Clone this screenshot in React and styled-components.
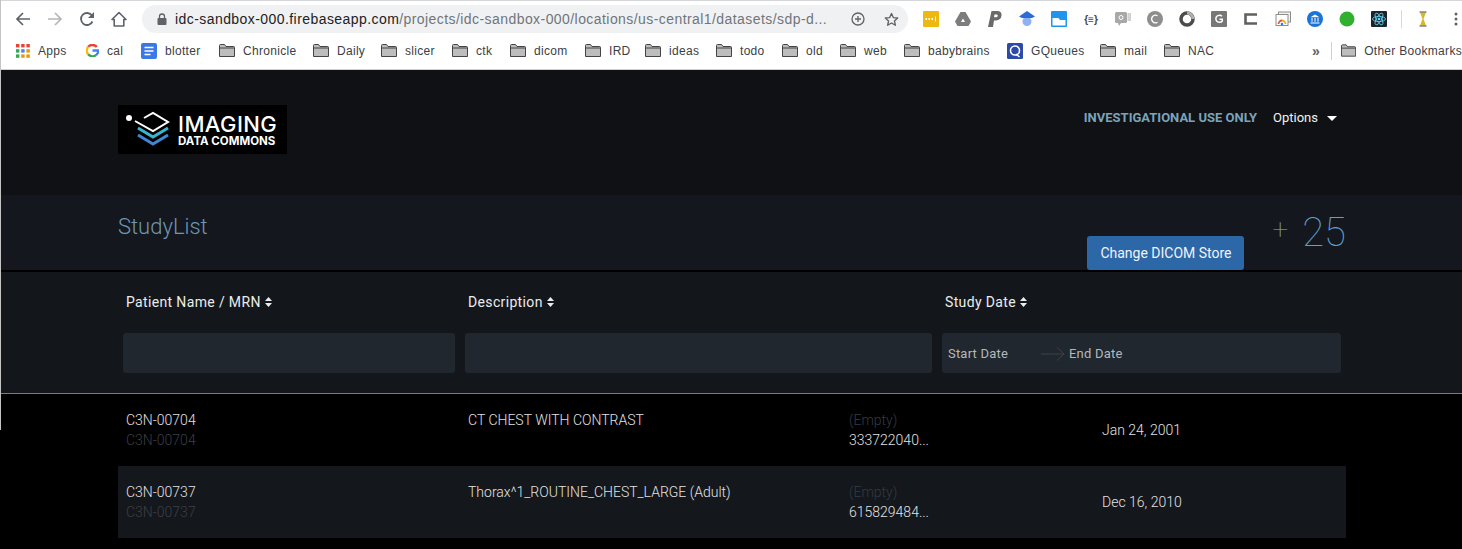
import React from "react";
import styled, { createGlobalStyle } from "styled-components";

const GlobalStyle = createGlobalStyle`
  html, body {
    margin: 0;
    padding: 0;
    background: #000;
    overflow: hidden;
  }
  * {
    box-sizing: border-box;
  }
`;

const Page = styled.div`
  position: relative;
  width: 1462px;
  height: 549px;
  overflow: hidden;
  font-family: Roboto, "Liberation Sans", sans-serif;
  background: #000;
`;

const WindowEdge = styled.div`
  position: absolute;
  left: 0;
  top: 0;
  width: 1px;
  height: 430px;
  background: #c4c4c4;
`;

const Chrome = styled.div`
  height: 70px;
  background: #fff;
  border-bottom: 1px solid #d0d0d0;
  font-family: "Liberation Sans", Arial, sans-serif;
`;

const Toolbar = styled.div`
  display: flex;
  align-items: center;
  height: 36px;
  padding: 1px 0 0 15px;
  border-top: 1px solid #d4d6da;
`;

const NavButtons = styled.div`
  display: flex;
  flex: none;
  align-items: center;
  gap: 16px;
  width: 127px;
`;

const Omnibox = styled.div`
  display: flex;
  flex: none;
  align-items: center;
  width: 766px;
  height: 28px;
  border-radius: 14px;
  background: #f0f1f3;
  padding: 0 9px 0 15px;
  font-size: 14px;
  letter-spacing: 0.43px;
  color: #70757a;
`;

const Host = styled.span`
  color: #202124;
`;

const UrlText = styled.span`
  flex: 1;
  margin-left: 8px;
  white-space: nowrap;
`;

const OmniIcons = styled.div`
  display: flex;
  align-items: center;
  gap: 19px;
`;

const Extensions = styled.div`
  display: flex;
  flex: none;
  align-items: center;
  margin-left: 15px;
  gap: 16px;
`;

const ExtSlot = styled.div`
  flex: none;
  width: 16px;
  height: 16px;
  display: flex;
  align-items: center;
  justify-content: center;
`;

const MenuSlot = styled(ExtSlot)`
  margin-left: 1px;
`;

const JsonGlyph = styled.span`
  font-size: 10px;
  font-weight: 700;
  color: #444;
  white-space: nowrap;
`;

const ExtDivider = styled.div`
  flex: none;
  width: 1px;
  height: 18px;
  background: #d8d8d8;
  margin: 0 -3px 0 -2px;
`;

const Bookmarks = styled.div`
  display: flex;
  align-items: center;
  height: 29px;
  padding-left: 16px;
  font-size: 12px;
  letter-spacing: 0.3px;
  color: #3c4043;
`;

const Bookmark = styled.div`
  display: flex;
  align-items: center;
  gap: 8px;
  width: ${({ $w }) => $w}px;
  flex: none;
  white-space: nowrap;
`;

const BarDivider = styled.div`
  flex: none;
  width: 1px;
  height: 18px;
  background: #d0d0d0;
  margin: 0 9px 0 10px;
`;

const Chevrons = styled.span`
  flex: none;
  width: 9px;
  font-size: 14px;
  font-weight: 700;
  line-height: 14px;
  color: #5f6368;
`;

const Header = styled.header`
  height: 125px;
  background: #0f1114;
  display: flex;
  justify-content: space-between;
  padding: 35px 125px 0 118px;
`;

const Logo = styled.div`
  display: flex;
  align-items: center;
  width: 169px;
  height: 49px;
  background: #000;
  gap: 8px;
  color: #fff;
  font-family: Inter, "Liberation Sans", sans-serif;
`;

const LogoText = styled.div`
  display: flex;
  flex-direction: column;
`;

const LogoTitle = styled.span`
  font-size: 22px;
  font-weight: 500;
  line-height: 22px;
  letter-spacing: 0.4px;
`;

const LogoSub = styled.span`
  font-size: 11.5px;
  line-height: 12px;
  font-weight: 700;
`;

const HeaderLinks = styled.div`
  display: flex;
  align-items: center;
  height: 25px;
  font-size: 13px;
`;

const UseNotice = styled.span`
  font-weight: 700;
  color: #7ba3bb;
  margin-right: 16px;
`;

const Options = styled.span`
  color: #f2f2f2;
  margin-right: 9px;
`;

const Caret = styled.span`
  width: 0;
  height: 0;
  margin-top: 2px;
  border-left: 5px solid transparent;
  border-right: 5px solid transparent;
  border-top: 5px solid #fff;
`;

const ListBar = styled.div`
  height: 75px;
  background: #14181e;
  display: flex;
  justify-content: space-between;
  padding: 16px 116px 0 118px;
`;

const ListTitle = styled.h1`
  margin: 0;
  font-size: 22px;
  line-height: 32px;
  font-weight: 300;
  color: #6e97b3;
`;

const ListActions = styled.div`
  display: flex;
  align-items: flex-start;
`;

const ChangeButton = styled.button`
  width: 157px;
  height: 34px;
  margin: 25px 28px 0 0;
  border: none;
  border-radius: 3px;
  background: #2c67a8;
  color: #f0f3f7;
  font-family: inherit;
  font-size: 14px;
`;

const Plus = styled.span`
  font-size: 28px;
  line-height: 30px;
  margin-top: 4px;
  font-weight: 100;
  color: #8ab0c8;
  margin-right: 14px;
`;

const Count = styled.span`
  font-size: 40px;
  line-height: 44px;
  font-weight: 100;
  color: #5fa0cc;
`;

const FilterPanel = styled.div`
  height: 124px;
  background: #13171c;
  border-top: 2px solid #000;
  border-bottom: 1px solid #3c8fc4;
  padding: 19px 0 0 123px;
`;

const ColumnRow = styled.div`
  display: flex;
  gap: 10px;
`;

const FilterColumn = styled.div`
  width: ${({ $w }) => $w}px;
`;

const ColumnLabel = styled.div`
  display: flex;
  align-items: center;
  gap: 4px;
  height: 22px;
  padding-left: 3px;
  margin-bottom: 20px;
  font-size: 14px;
  letter-spacing: 0.35px;
  color: #ececec;
`;

const FilterInput = styled.div`
  display: flex;
  align-items: center;
  height: 40px;
  border-radius: 3px;
  background: #20272e;
  padding: 1px 0 0 6px;
  font-size: 13px;
  letter-spacing: 0.2px;
  color: #b4b8bc;
`;

const DateLabel = styled.span`
  width: ${({ $w }) => $w}px;
  margin-left: ${({ $gap }) => $gap || 0}px;
`;

const Row = styled.div`
  display: flex;
  width: 1228px;
  height: 72px;
  margin-left: 118px;
  padding-top: 16px;
  background: ${({ $shaded }) => ($shaded ? "#14171c" : "#000")};
  font-size: 14px;
  font-weight: 300;
  line-height: 20px;
  color: #e2e2e2;
`;

const RowCell = styled.div`
  width: ${({ $w }) => $w}px;
  padding-left: ${({ $pad }) => $pad || 0}px;
`;

const DateCell = styled(RowCell)`
  padding-top: 10px;
`;

const Faint = styled.div`
  color: ${({ $tone }) => $tone};
`;

const Back = () => (
  <svg width="16" height="16" viewBox="0 0 16 16" fill="none" stroke="#5f6368" strokeWidth="1.7">
    <path d="M15 8H2M8 2 2 8l6 6" />
  </svg>
);

const Forward = () => (
  <svg width="16" height="16" viewBox="0 0 16 16" fill="none" stroke="#b4b6b9" strokeWidth="1.7">
    <path d="M1 8h13M8 2l6 6-6 6" />
  </svg>
);

const Reload = () => (
  <svg width="16" height="16" viewBox="0 0 16 16" fill="none" stroke="#5f6368" strokeWidth="1.8">
    <path d="M13.5 10.500A6 6 0 1 1 13 4.600" />
    <path d="M15 1v6H9z" fill="#5f6368" stroke="none" />
  </svg>
);

const Home = () => (
  <svg width="16" height="16" viewBox="0 0 16 16" fill="none" stroke="#5f6368" strokeWidth="1.6" strokeLinejoin="round">
    <path d="M1 8.500 8 1.500l7 7h-2.200V15H3.200V8.500z" />
  </svg>
);

const Lock = () => (
  <svg width="10" height="12" viewBox="0 0 10 12">
    <rect x="0.5" y="5" width="9" height="7" rx="1" fill="#5f6368" />
    <path d="M2.500 5.500V3.500a2.500 2.500 0 0 1 5 0v2" fill="none" stroke="#5f6368" strokeWidth="1.3" />
  </svg>
);

const AddCircle = () => (
  <svg width="14" height="14" viewBox="0 0 14 14" fill="none" stroke="#5f6368" strokeWidth="1.3">
    <circle cx="7" cy="7" r="6" />
    <path d="M4 7h6M7 4v6" />
  </svg>
);

const Star = () => (
  <svg width="15" height="15" viewBox="0 0 24 24" fill="none" stroke="#5f6368" strokeWidth="2.2" strokeLinejoin="round">
    <path d="M12 2.500l2.900 6.400 7 .7-5.200 4.700 1.500 6.900-6.200-3.600-6.200 3.600 1.500-6.900L2.100 9.600l7-.7z" />
  </svg>
);

const Folder = () => (
  <svg width="16" height="13" viewBox="0 0 16 13">
    <path d="M.5 12.500V1.500q0-1 1-1h4l1.500 2h7.500q1 0 1 1v9z" fill="#bdbdbd" stroke="#444" />
    <path d="M.5 4h15" stroke="#444" strokeWidth="1" />
  </svg>
);

const AppsGrid = () => {
  const colors = ["#ea4335", "#ea4335", "#ea4335", "#34a853", "#4285f4", "#f09300", "#34a853", "#f09300", "#f09300"];
  return (
    <svg width="14" height="14" viewBox="0 0 14 14">
      {colors.map((c, i) => (
        <rect key={i} x={(i % 3) * 5.2} y={Math.floor(i / 3) * 5.2} width="3.4" height="3.4" fill={c} />
      ))}
    </svg>
  );
};

const GoogleG = () => (
  <svg width="13" height="13" viewBox="0 0 24 24" fill="none" strokeWidth="4.5">
    <path d="M20 5.500A11 11 0 0 0 4 5" stroke="#ea4335" />
    <path d="M4 5a11 11 0 0 0 0 14" stroke="#fbbc05" />
    <path d="M4 19a11 11 0 0 0 15 1" stroke="#34a853" />
    <path d="M19 20a11 11 0 0 0 4-8H12" stroke="#4285f4" />
  </svg>
);

const DocsIcon = () => (
  <svg width="16" height="16" viewBox="0 0 16 16">
    <rect width="16" height="16" rx="2" fill="#3b78e7" />
    <path d="M3.500 4.500h9M3.500 8h9M3.500 11.500h6" stroke="#fff" strokeWidth="1.6" />
  </svg>
);

const GQueuesIcon = () => (
  <svg width="16" height="16" viewBox="0 0 16 16">
    <rect width="16" height="16" rx="1.5" fill="#2c4aa8" />
    <circle cx="8" cy="7.500" r="4.500" fill="none" stroke="#fff" strokeWidth="1.6" />
    <path d="M9 11l3.500 3" stroke="#fff" strokeWidth="1.4" />
  </svg>
);

const extensionIcons = [
  <svg width="16" height="16" viewBox="0 0 16 16" key="sheet">
    <rect width="16" height="16" rx="1" fill="#ecb811" />
    <path d="M2.500 8H4M5.500 8H7M8.500 8H10" stroke="#fff" strokeWidth="1.8" />
    <path d="M12.500 5.500v5" stroke="#fff" strokeWidth="1" />
  </svg>,
  <svg width="16" height="15" viewBox="0 0 16 15" key="drive">
    <path d="M5.500 0h5L16 9.500 13.500 14h-11L0 9.500z" fill="#7d7d7d" />
    <path d="M8 6.500 6 10h4z" fill="#fff" />
  </svg>,
  <svg width="14" height="16" viewBox="0 0 14 16" key="paypal">
    <path d="M3.500 0H10q4 .5 3.500 4.500Q13 9 8 9.500H6L5 16H0z" fill="#6a6a6a" />
    <path d="M6.500 3.500H9q1 .5.7 1.800-.4 1-1.700 1H6z" fill="#fff" />
  </svg>,
  <svg width="16" height="16" viewBox="0 0 16 16" key="grad">
    <circle cx="8" cy="10.500" r="4.500" fill="#8fb2f2" />
    <path d="M8 0l8 5.500-3 1.500H3L0 5.500z" fill="#2c6cd8" />
  </svg>,
  <svg width="16" height="16" viewBox="0 0 16 16" key="tab">
    <rect width="16" height="16" rx="1" fill="#1e96ee" />
    <path d="M1.500 7h6L9 9h5.500v5.500h-13z" fill="#fff" />
  </svg>,
  <JsonGlyph key="json">{"{≡}"}</JsonGlyph>,
  <svg width="16" height="16" viewBox="0 0 16 16" key="chat">
    <rect x="0" y="1" width="12" height="11" rx="1.5" fill="#a8a8a8" />
    <rect x="12.500" y="2" width="3.500" height="8" fill="#d2d2d2" />
    <path d="M3 12h3l-2 3z" fill="#a8a8a8" />
    <circle cx="6" cy="6.500" r="2" fill="none" stroke="#fff" strokeWidth="1" />
  </svg>,
  <svg width="16" height="16" viewBox="0 0 16 16" key="c">
    <circle cx="8" cy="8" r="8" fill="#8e8e8e" />
    <path d="M10.500 4.800a3.800 3.800 0 1 0 0 6.400" fill="none" stroke="#fff" strokeWidth="1.3" />
  </svg>,
  <svg width="16" height="16" viewBox="0 0 16 16" key="ring">
    <circle cx="8" cy="8" r="6" fill="none" stroke="#4c4c4c" strokeWidth="3.5" />
    <path d="M8 2a6 6 0 0 1 6 6" fill="none" stroke="#b0b0b0" strokeWidth="3" />
  </svg>,
  <svg width="16" height="16" viewBox="0 0 16 16" key="g">
    <rect width="16" height="16" rx="1" fill="#777" />
    <path d="M11 5.200a3.600 3.600 0 1 0 .3 4.800V8.200H8.500" fill="none" stroke="#fff" strokeWidth="1.5" />
  </svg>,
  <svg width="14" height="12" viewBox="0 0 14 12" key="bracket">
    <path d="M13 1.500H1.500v9H13" fill="none" stroke="#606060" strokeWidth="2.6" />
  </svg>,
  <svg width="16" height="16" viewBox="0 0 16 16" key="tabs">
    <rect x="3.500" y="1" width="12" height="10" fill="#f2f2f2" stroke="#8c8c8c" />
    <rect x="1" y="3.500" width="12" height="11" fill="#fff" stroke="#8c8c8c" />
    <path d="M3.500 13a3.500 3.500 0 0 1 3.500-3.500" fill="none" stroke="#e05a3a" strokeWidth="1.8" />
    <path d="M7 9.500a3.500 3.500 0 0 1 3.500 3.500" fill="none" stroke="#e8b020" strokeWidth="1.8" />
    <circle cx="7" cy="13" r="1.300" fill="#3b78e7" />
  </svg>,
  <svg width="16" height="16" viewBox="0 0 16 16" key="bank">
    <circle cx="8" cy="8" r="8" fill="#1a73d8" />
    <path d="M3.500 6.200 8 3.500l4.500 2.700zM3.500 11.500h9v1h-9zM4.500 7h1v3.800h-1zM7.500 7h1v3.800h-1zM10.500 7h1v3.800h-1z" fill="#fff" />
  </svg>,
  <svg width="16" height="16" viewBox="0 0 16 16" key="dot">
    <circle cx="8" cy="8" r="7.5" fill="#2fb12f" />
  </svg>,
  <svg width="16" height="16" viewBox="0 0 16 16" key="react">
    <rect width="16" height="16" rx="1" fill="#20232a" />
    <g fill="none" stroke="#61dafb" strokeWidth="0.8">
      <ellipse cx="8" cy="8" rx="6.500" ry="2.600" />
      <ellipse cx="8" cy="8" rx="6.500" ry="2.600" transform="rotate(60 8 8)" />
      <ellipse cx="8" cy="8" rx="6.500" ry="2.600" transform="rotate(120 8 8)" />
    </g>
    <circle cx="8" cy="8" r="1.300" fill="#61dafb" />
  </svg>,
];

const HourGlass = () => (
  <svg width="8" height="16" viewBox="0 0 8 16">
    <path d="M1 1.500h6L4.500 8 7 14.500H1L3.500 8z" fill="#d9b827" />
    <path d="M.5 1h7M.5 15h7" stroke="#4a4a4a" strokeWidth="1.2" />
  </svg>
);

const MenuDots = () => (
  <svg width="4" height="14" viewBox="0 0 4 14" fill="#5f6368">
    <circle cx="2" cy="2" r="1.5" />
    <circle cx="2" cy="7" r="1.5" />
    <circle cx="2" cy="12" r="1.5" />
  </svg>
);

const SortIcon = () => (
  <svg width="7" height="10" viewBox="0 0 7 10" fill="#ececec">
    <path d="M3.500 0 7 4H0zM3.500 10 0 6h7z" />
  </svg>
);

const DateArrow = () => (
  <svg width="24" height="14" viewBox="0 0 24 14" fill="none" stroke="#3c4248" strokeWidth="1">
    <path d="M0 7h23M16 .5 23 7l-7 6.500" />
  </svg>
);

const LogoMark = () => (
  <svg width="52" height="49" viewBox="0 0 52 49" fill="none">
    <circle cx="11" cy="13" r="3" fill="#fff" />
    <path d="M17 16l18 10 15-9-15-9-9 5" stroke="#fff" strokeWidth="2" />
    <path d="M20 23l15 9 15-9" stroke="#38b6cf" strokeWidth="3" />
    <path d="M20 30l15 9 15-9" stroke="#3f86d4" strokeWidth="3" />
  </svg>
);

const bookmarks = [
  { label: "Apps", icon: <AppsGrid />, w: 70 },
  { label: "cal", icon: <GoogleG />, w: 55 },
  { label: "blotter", icon: <DocsIcon />, w: 78 },
  { label: "Chronicle", w: 94 },
  { label: "Daily", w: 68 },
  { label: "slicer", w: 71 },
  { label: "ctk", w: 58 },
  { label: "dicom", w: 75 },
  { label: "IRD", w: 60 },
  { label: "ideas", w: 71 },
  { label: "todo", w: 66 },
  { label: "old", w: 58 },
  { label: "web", w: 64 },
  { label: "babybrains", w: 103 },
  { label: "GQueues", icon: <GQueuesIcon />, w: 93 },
  { label: "mail", w: 64 },
  { label: "NAC", w: 148 },
];

const rows = [
  { name: "C3N-00704", desc: "CT CHEST WITH CONTRAST", acc: "333722040...", date: "Jan 24, 2001" },
  { name: "C3N-00737", desc: "Thorax^1_ROUTINE_CHEST_LARGE (Adult)", acc: "615829484...", date: "Dec 16, 2010", shaded: true },
];

const App = () => {
  return (
    <Page>
      <GlobalStyle />
      <Chrome>
        <Toolbar>
          <NavButtons>
            <Back />
            <Forward />
            <Reload />
            <Home />
          </NavButtons>
          <Omnibox>
            <Lock />
            <UrlText>
              <Host>idc-sandbox-000.firebaseapp.com</Host>/projects/idc-sandbox-000/locations/us-central1/datasets/sdp-d...
            </UrlText>
            <OmniIcons>
              <AddCircle />
              <Star />
            </OmniIcons>
          </Omnibox>
          <Extensions>
            {extensionIcons.map((icon) => (
              <ExtSlot key={icon.key}>{icon}</ExtSlot>
            ))}
            <ExtDivider />
            <ExtSlot>
              <HourGlass />
            </ExtSlot>
            <MenuSlot>
              <MenuDots />
            </MenuSlot>
          </Extensions>
        </Toolbar>
        <Bookmarks>
          {bookmarks.map((b) => (
            <Bookmark key={b.label} $w={b.w}>
              {b.icon || <Folder />}
              {b.label}
            </Bookmark>
          ))}
          <Chevrons>»</Chevrons>
          <BarDivider />
          <Bookmark $w={121}>
            <Folder />
            Other Bookmarks
          </Bookmark>
        </Bookmarks>
      </Chrome>
      <Header>
        <Logo>
          <LogoMark />
          <LogoText>
            <LogoTitle>IMAGING</LogoTitle>
            <LogoSub>DATA COMMONS</LogoSub>
          </LogoText>
        </Logo>
        <HeaderLinks>
          <UseNotice>INVESTIGATIONAL USE ONLY</UseNotice>
          <Options>Options</Options>
          <Caret />
        </HeaderLinks>
      </Header>
      <ListBar>
        <ListTitle>StudyList</ListTitle>
        <ListActions>
          <ChangeButton>Change DICOM Store</ChangeButton>
          <Plus>+</Plus>
          <Count>25</Count>
        </ListActions>
      </ListBar>
      <FilterPanel>
        <ColumnRow>
          <FilterColumn $w={332}>
            <ColumnLabel>
              Patient Name / MRN
              <SortIcon />
            </ColumnLabel>
            <FilterInput />
          </FilterColumn>
          <FilterColumn $w={467}>
            <ColumnLabel>
              Description
              <SortIcon />
            </ColumnLabel>
            <FilterInput />
          </FilterColumn>
          <FilterColumn $w={399}>
            <ColumnLabel>
              Study Date
              <SortIcon />
            </ColumnLabel>
            <FilterInput>
              <DateLabel $w={93}>Start Date</DateLabel>
              <DateArrow />
              <DateLabel $w={70} $gap={4}>End Date</DateLabel>
            </FilterInput>
          </FilterColumn>
        </ColumnRow>
      </FilterPanel>
      {rows.map((r) => (
        <Row key={r.name} $shaded={r.shaded}>
          <RowCell $w={350} $pad={8}>
            {r.name}
            <Faint $tone="#3c3f44">{r.name}</Faint>
          </RowCell>
          <RowCell $w={381}>{r.desc}</RowCell>
          <RowCell $w={253}>
            <Faint $tone="#333c44">(Empty)</Faint>
            {r.acc}
          </RowCell>
          <DateCell $w={200}>{r.date}</DateCell>
        </Row>
      ))}
      <WindowEdge />
    </Page>
  );
};

export default App;
